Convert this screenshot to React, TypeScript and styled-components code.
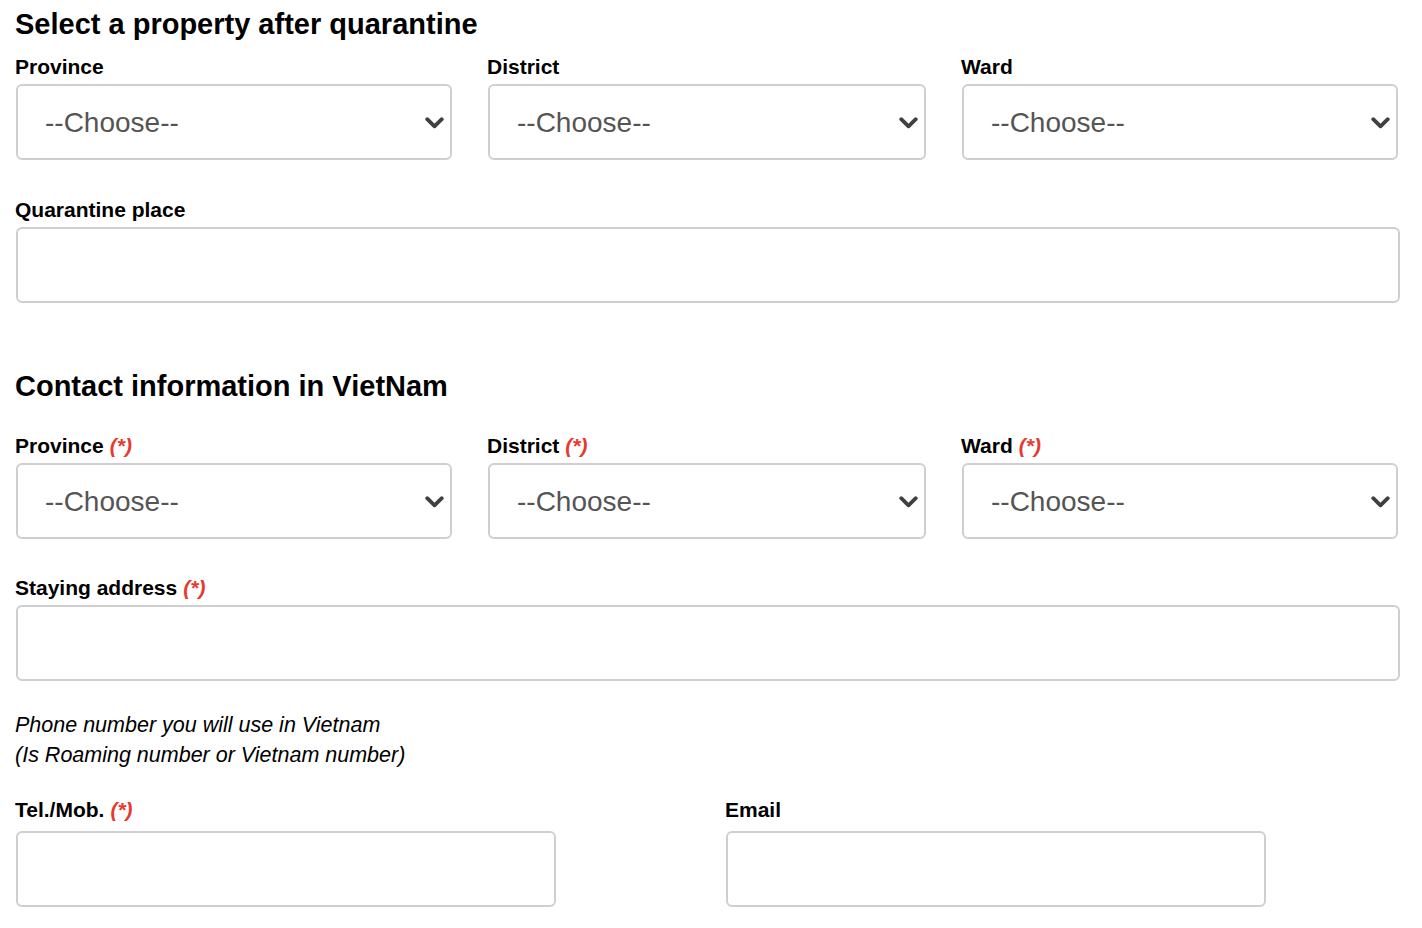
import React from "react";
import styled, { createGlobalStyle } from "styled-components";

const Global = createGlobalStyle`
  html, body { margin: 0; padding: 0; background: #fff; }
  body { font-family: "Liberation Sans", Arial, Helvetica, sans-serif; color: #000; }
  * { box-sizing: border-box; }
`;

const Page = styled.div`
  padding: 8px 22px 0 16px;
  width: 1422px;
`;

const Heading = styled.h2<{ $top?: number }>`
  margin: ${(p) => p.$top ?? 0}px 0 0 -1px;
  font-size: 29px;
  line-height: 32px;
  font-weight: 700;
`;

const Grid3 = styled.div<{ $top: number }>`
  display: grid;
  grid-template-columns: 436px 438px 436px;
  column-gap: 36px;
  margin-top: ${(p) => p.$top}px;
`;

const Grid2 = styled.div<{ $top: number }>`
  display: grid;
  grid-template-columns: 674px 674px;
  column-gap: 36px;
  margin-top: ${(p) => p.$top}px;
`;

const Field = styled.div<{ $top?: number }>`
  display: flex;
  flex-direction: column;
  margin-top: ${(p) => p.$top ?? 0}px;
`;

const Label = styled.label<{ $gap?: number }>`
  font-size: 21px;
  line-height: 24px;
  font-weight: 700;
  margin: 0 0 ${(p) => p.$gap ?? 5}px -1px;
`;

const Req = styled.span`
  color: #e8392e;
  font-style: italic;
  font-weight: 700;
  margin-left: 6px;
`;

const SelectWrap = styled.div`
  position: relative;
`;

const Select = styled.select`
  appearance: none;
  -webkit-appearance: none;
  width: 100%;
  height: 76px;
  border: 2px solid #cfcfcf;
  border-radius: 6px;
  background: #fff;
  padding: 0 0 0 27px;
  font-family: "Liberation Sans", Arial, sans-serif;
  font-size: 28px;
  color: #555;
  outline: none;
`;

const Chevron = styled.svg`
  position: absolute;
  right: 8px;
  top: 33px;
  width: 19px;
  height: 12px;
  pointer-events: none;
`;

const TextInput = styled.input<{ $w?: string }>`
  width: ${(p) => p.$w ?? "100%"};
  height: 76px;
  border: 2px solid #cfcfcf;
  border-radius: 6px;
  background: #fff;
  padding: 0 16px;
  font-size: 24px;
  outline: none;
`;

const Note = styled.p`
  margin: 29px 0 0 -1px;
  font-size: 21.5px;
  line-height: 30px;
  font-style: italic;
`;

const Dropdown: React.FC = () => (
  <SelectWrap>
    <Select defaultValue="">
      <option value="">--Choose--</option>
    </Select>
    <Chevron viewBox="0 0 19 12">
      <polyline points="2.2,2.2 9.5,9.3 16.8,2.2" fill="none" stroke="#404040" strokeWidth="3.8" strokeLinecap="round" strokeLinejoin="round" />
    </Chevron>
  </SelectWrap>
);

const SelectField: React.FC<{ label: string; required?: boolean }> = ({ label, required }) => (
  <Field>
    <Label>
      {label}
      {required && <Req>(*)</Req>}
    </Label>
    <Dropdown />
  </Field>
);

export default function App() {
  return (
    <>
      <Global />
      <Page>
        <Heading>Select a property after quarantine</Heading>
        <Grid3 $top={15}>
          <SelectField label="Province" />
          <SelectField label="District" />
          <SelectField label="Ward" />
        </Grid3>
        <Field $top={38}>
          <Label>Quarantine place</Label>
          <TextInput />
        </Field>

        <Heading $top={67}>Contact information in VietNam</Heading>
        <Grid3 $top={32}>
          <SelectField label="Province" required />
          <SelectField label="District" required />
          <SelectField label="Ward" required />
        </Grid3>
        <Field $top={37}>
          <Label>
            Staying address<Req>(*)</Req>
          </Label>
          <TextInput />
        </Field>

        <Note>
          Phone number you will use in Vietnam
          <br />
          (Is Roaming number or Vietnam number)
        </Note>

        <Grid2 $top={28}>
          <Field>
            <Label $gap={9}>
              Tel./Mob.<Req>(*)</Req>
            </Label>
            <TextInput $w="540px" />
          </Field>
          <Field>
            <Label $gap={9}>Email</Label>
            <TextInput $w="540px" />
          </Field>
        </Grid2>
      </Page>
    </>
  );
}
